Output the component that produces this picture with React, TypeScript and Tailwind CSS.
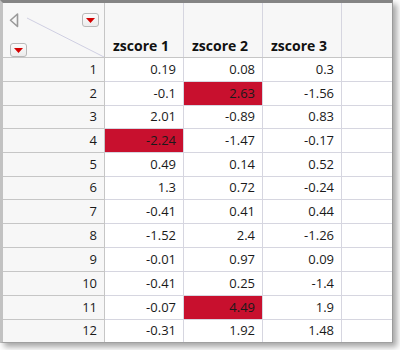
import React from "react";

const rows: [number, string, string, string][] = [
  [1, "0.19", "0.08", "0.3"],
  [2, "-0.1", "2.63", "-1.56"],
  [3, "2.01", "-0.89", "0.83"],
  [4, "-2.24", "-1.47", "-0.17"],
  [5, "0.49", "0.14", "0.52"],
  [6, "1.3", "0.72", "-0.24"],
  [7, "-0.41", "0.41", "0.44"],
  [8, "-1.52", "2.4", "-1.26"],
  [9, "-0.01", "0.97", "0.09"],
  [10, "-0.41", "0.25", "-1.4"],
  [11, "-0.07", "4.49", "1.9"],
  [12, "-0.31", "1.92", "1.48"],
];

const red = new Set(["2-2", "4-1", "11-2"]);
const shortRows = new Set([3, 6, 12]);

function RedButton() {
  return (
    <div className="w-[17px] h-[14px] rounded-[3px] border border-[#b9b9b9] bg-gradient-to-b from-[#fbfbfb] to-[#ececec] flex items-center justify-center">
      <svg width="9" height="5" viewBox="0 0 9 5">
        <polygon points="0,0 9,0 4.5,5" fill="#d40000" />
      </svg>
    </div>
  );
}

export default function App() {
  return (
    <div className="w-[400px] h-[350px] bg-white" style={{ fontFamily: '"Open Sans", "Noto Sans", sans-serif' }}>
      <div className="w-[393px] h-[343px] overflow-hidden border-t-[3px] border-t-[#858585] border-l-[3px] border-l-[#c2c2c2] border-r border-r-[#9a9a9a] border-b border-b-[#a0a0a0] shadow-[4px_4px_6px_rgba(0,0,0,0.35)] flex flex-col">
        {/* header */}
        <div className="flex h-[55px] shrink-0 border-b border-[#c6c6c6] bg-[#f7f7f7]">
          <div className="relative w-[102px] shrink-0 border-r border-[#c6c6c6]">
            <svg className="absolute left-0 top-0" width="101" height="54" viewBox="0 0 101 54">
              <line x1="24" y1="15" x2="101" y2="54" stroke="#cfcfe2" strokeWidth="1" />
              <polygon points="14.5,11 14.5,23.5 7.5,17.25" fill="none" stroke="#9a9a9a" strokeWidth="1.6" strokeLinejoin="round" />
            </svg>
            <div className="absolute left-[79px] top-[10px]">
              <RedButton />
            </div>
            <div className="absolute left-[7px] top-[40px]">
              <RedButton />
            </div>
          </div>
          {["zscore 1", "zscore 2", "zscore 3"].map((h) => (
            <div
              key={h}
              className="w-[79px] shrink-0 border-r border-[#d6d6e0] flex items-end pl-[8px] pb-[1px] text-[14px] font-bold text-[#111] leading-[20px]"
            >
              {h}
            </div>
          ))}
          <div className="flex-1" />
        </div>
        {rows.map(([n, a, b, c]) => (
          <div key={n} className={`flex shrink-0 ${shortRows.has(n) ? "h-[23px]" : "h-[24px]"}`}>
            <div className="w-[102px] shrink-0 bg-[#f7f7f7] border-r border-b border-r-[#c6c6c6] border-b-[#c6c6c6] flex items-center justify-end pr-[7px] text-[13px] text-[#1a1a1a]">
              {n}
            </div>
            {[a, b, c].map((v, i) => (
              <div
                key={i}
                className={`w-[79px] shrink-0 border-r border-b border-[#d6d6e0] flex items-center justify-end pr-[7px] text-[13px] text-[#1a1a1a] ${red.has(`${n}-${i + 1}`) ? "bg-[#c8102e]" : "bg-white"}`}
              >
                {v}
              </div>
            ))}
            <div className="flex-1 border-b border-[#d6d6e0] bg-white" />
          </div>
        ))}
      </div>
    </div>
  );
}
